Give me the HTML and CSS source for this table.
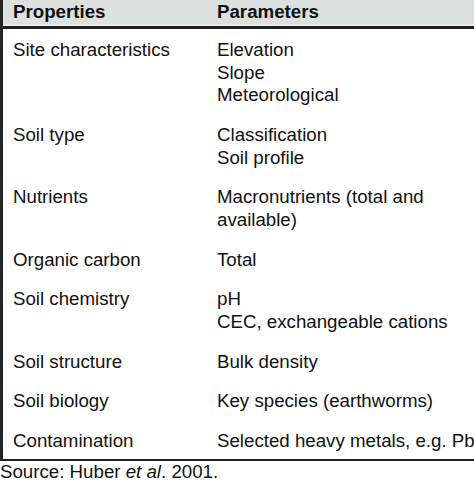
FILE: index.html
```html
<!DOCTYPE html>
<html>
<head>
<meta charset="utf-8">
<link rel="stylesheet" href="styles.css">
</head>
<body>
<div class="page">
  <div class="table">
    <div class="row head">
      <div class="cell c1">Properties</div>
      <div class="cell c2">Parameters</div>
    </div>
    <div class="row">
      <div class="cell c1">Site characteristics</div>
      <div class="cell c2">Elevation<br>Slope<br>Meteorological</div>
    </div>
    <div class="row">
      <div class="cell c1">Soil type</div>
      <div class="cell c2">Classification<br>Soil profile</div>
    </div>
    <div class="row">
      <div class="cell c1">Nutrients</div>
      <div class="cell c2">Macronutrients (total and<br>available)</div>
    </div>
    <div class="row">
      <div class="cell c1">Organic carbon</div>
      <div class="cell c2">Total</div>
    </div>
    <div class="row">
      <div class="cell c1">Soil chemistry</div>
      <div class="cell c2">pH<br>CEC, exchangeable cations</div>
    </div>
    <div class="row">
      <div class="cell c1">Soil structure</div>
      <div class="cell c2">Bulk density</div>
    </div>
    <div class="row">
      <div class="cell c1">Soil biology</div>
      <div class="cell c2">Key species (earthworms)</div>
    </div>
    <div class="row last">
      <div class="cell c1">Contamination</div>
      <div class="cell c2">Selected heavy metals, e.g. Pb</div>
    </div>
  </div>
  <div class="source">Source: Huber <i>et al</i>. 2001.</div>
</div>
</body>
</html>
```

FILE: styles.css
```css
html, body {
  margin: 0;
  padding: 0;
  background: #ffffff;
}
body {
  width: 474px;
  height: 482px;
  overflow: hidden;
  font-family: "Liberation Sans", Arial, sans-serif;
  font-size: 18.7px;
  color: #111111;
}
.page {
  width: 474px;
}
.table {
  width: 560px;
  border-left: 3px solid #262626;
  border-bottom: 2px solid #1c1c1c;
}
.row {
  display: grid;
  grid-template-columns: 214px 1fr;
  padding: 10.25px 0 7px 0;
  line-height: 22.5px;
  white-space: nowrap;
}
.row.last {
  padding-bottom: 6px;
}
.row.head {
  height: 29px;
  box-sizing: border-box;
  padding: 0;
  background: #dce0df;
  border-bottom: 3px solid #1e1e1e;
  box-shadow: inset 0 -2px 0 #e9ecea;
  font-weight: bold;
  line-height: 23px;
}
.cell.c1 {
  padding-left: 10px;
}
.source {
  padding: 1px 0 0 0;
  line-height: 19px;
  white-space: nowrap;
}
```
